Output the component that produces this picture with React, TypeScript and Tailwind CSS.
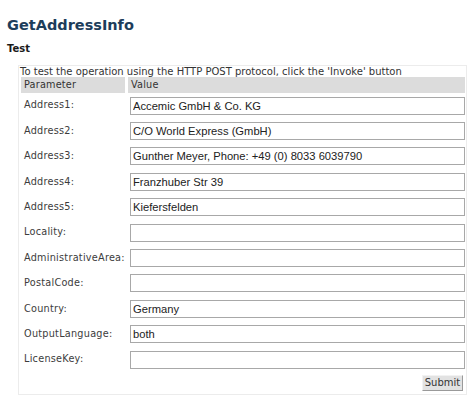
const rows: [string, string][] = [
  ['Address1:', 'Accemic GmbH & Co. KG'],
  ['Address2:', 'C/O World Express (GmbH)'],
  ['Address3:', 'Gunther Meyer, Phone: +49 (0) 8033 6039790'],
  ['Address4:', 'Franzhuber Str 39'],
  ['Address5:', 'Kiefersfelden'],
  ['Locality:', ''],
  ['AdministrativeArea:', ''],
  ['PostalCode:', ''],
  ['Country:', 'Germany'],
  ['OutputLanguage:', 'both'],
  ['LicenseKey:', ''],
];

export default function App() {
  return (
    <div className="w-[474px] h-[410px] overflow-hidden bg-white text-[#333] font-['DejaVu_Sans',Verdana,sans-serif]">
      <h1 className="pl-[7px] pt-[16px] text-[14.5px] font-bold leading-[18px] text-[#1d3d5b]">
        GetAddressInfo
      </h1>
      <h2 className="pl-[7px] mt-[8px] text-[10px] font-bold leading-[13px] text-[#1a1a1a]">Test</h2>

      {/* form box */}
      <div className="ml-[18px] mt-[10px] w-[449px] border border-[#ececec]">
        <p className="pl-[1px] text-[10px] leading-[11px] whitespace-nowrap">
          To test the operation using the HTTP POST protocol, click the 'Invoke' button
        </p>
        <div className="flex gap-[3px] pl-[2px] pr-[1px] h-[16px] text-[9.7px] leading-[16px] tracking-[0.2px]">
          <div className="w-[104px] bg-[#dcdcdc] pl-[3px]">Parameter</div>
          <div className="flex-1 bg-[#dcdcdc] pl-[3px]">Value</div>
        </div>
        {rows.map(([label, value]) => (
          <div key={label} className="flex items-center h-[25.4px] pl-[2px] pr-[1px]">
            <div className="w-[107px] pl-[3px] text-[9.7px] tracking-[0.25px] text-[#3c3c3c] whitespace-nowrap">{label}</div>
            <div className="flex-1 pl-[2px]">
              <input
                readOnly
                value={value}
                className="block w-full h-[18px] border border-[#a8a8a8] bg-white pl-[2px] text-[11.2px] text-[#222] font-['Liberation_Sans',Arial,sans-serif] outline-none"
              />
            </div>
          </div>
        ))}
        <div className="flex justify-end pt-[2.6px] pb-[3px] pr-[3px]">
          <button className="h-[16px] w-[41px] bg-[#e2e2e2] border border-t-[#f2f2f2] border-l-[#f2f2f2] border-r-[#9a9a9a] border-b-[#9a9a9a] text-[10px] leading-[14px] text-[#333]">
            Submit
          </button>
        </div>
      </div>
    </div>
  );
}
